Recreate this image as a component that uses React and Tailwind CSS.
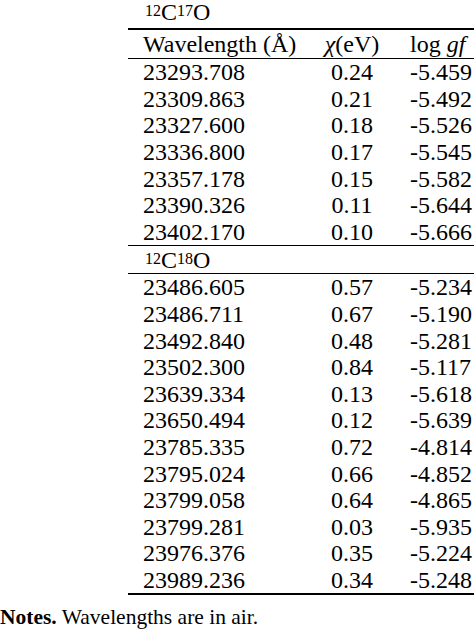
const serif = { fontFamily: '"Liberation Serif", "Times New Roman", serif' }

const co17 = [
  ["23293.708", "0.24", "-5.459"],
  ["23309.863", "0.21", "-5.492"],
  ["23327.600", "0.18", "-5.526"],
  ["23336.800", "0.17", "-5.545"],
  ["23357.178", "0.15", "-5.582"],
  ["23390.326", "0.11", "-5.644"],
  ["23402.170", "0.10", "-5.666"],
]

const co18 = [
  ["23486.605", "0.57", "-5.234"],
  ["23486.711", "0.67", "-5.190"],
  ["23492.840", "0.48", "-5.281"],
  ["23502.300", "0.84", "-5.117"],
  ["23639.334", "0.13", "-5.618"],
  ["23650.494", "0.12", "-5.639"],
  ["23785.335", "0.72", "-4.814"],
  ["23795.024", "0.66", "-4.852"],
  ["23799.058", "0.64", "-4.865"],
  ["23799.281", "0.03", "-5.935"],
  ["23976.376", "0.35", "-5.224"],
  ["23989.236", "0.34", "-5.248"],
]

const Isotope = ({ b }) => (
  <span className="leading-none">
    <sup className="text-[16px] relative -top-[4px] align-baseline">12</sup>C
    <sup className="text-[16px] relative -top-[4px] align-baseline">{b}</sup>O
  </span>
)

const Row = ({ row }) => (
  <div className="grid grid-cols-[170px_108px_1fr] h-[26.6px] items-center">
    <span className="pl-[15px]">{row[0]}</span>
    <span className="text-center">{row[1]}</span>
    <span className="pl-[4px]">{row[2]}</span>
  </div>
)

export default function App() {
  return (
    <div style={serif} className="w-[474px] h-[636px] overflow-hidden bg-white text-black text-[24px] leading-[26px]">
      <div className="h-[28px] pl-[145px] flex items-start">
        <Isotope b="17" />
      </div>
      <div className="ml-[128px] w-[400px] border-t-2 border-b-2 border-black">
        <div className="grid grid-cols-[170px_108px_1fr] h-[29px] items-center border-b border-black">
          <span className="pl-[15px]">Wavelength (Å)</span>
          <span className="text-center"><i>χ</i>(eV)</span>
          <span className="pl-[4px] whitespace-nowrap">log <i>gf</i></span>
        </div>
        {co17.map(r => <Row key={r[0]} row={r} />)}
        <div className="h-[29px] flex items-center pl-[17px] border-t border-b border-black">
          <Isotope b="18" />
        </div>
        {co18.map(r => <Row key={r[0]} row={r} />)}
      </div>
      <p className="text-[21.5px] pt-[10px] leading-[24px]">
        <b>Notes.</b> Wavelengths are in air.
      </p>
    </div>
  )
}
